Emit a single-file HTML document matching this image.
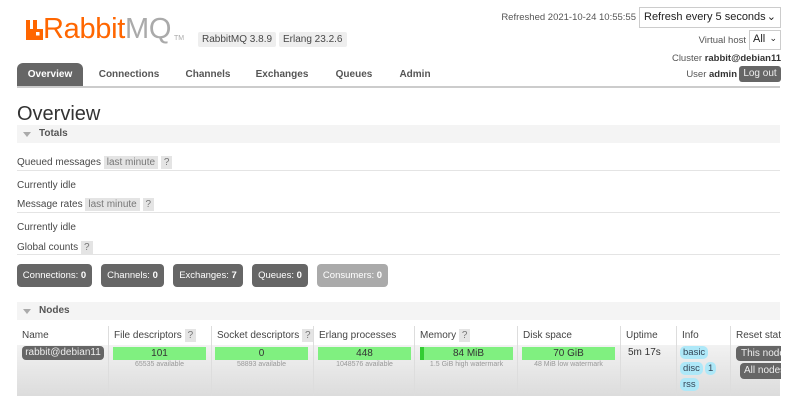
<!DOCTYPE html>
<html><head><style>
*{margin:0;padding:0;box-sizing:border-box}
body{width:800px;height:400px;overflow:hidden;background:#fff;font-family:"Liberation Sans",sans-serif;color:#484848;font-size:10px;position:relative}
.a{position:absolute;white-space:nowrap}
.r{position:absolute;white-space:nowrap;text-align:right}
.badge{background:#eee;padding:2px 4px;border-radius:2px}
.tab{position:absolute;top:63px;height:24px;line-height:24px;font-weight:bold;font-size:10px;color:#555;text-align:center}
.sep{position:absolute;left:17px;width:763px;height:1px;background:#e4e4e4}
.btn{position:absolute;top:264px;height:23px;line-height:23px;background:#666;color:#fff;border-radius:4px;text-align:center;font-size:9.5px}
.q{background:#e4e4e4;padding:1px 3px;color:#777}
.bar{position:absolute;left:17px;width:763px;height:18px;background:#f4f4f4;font-weight:bold;font-size:10px;line-height:18px;padding-left:22px;color:#555}
.bar:before{content:"";position:absolute;left:6px;top:7px;border-left:4px solid transparent;border-right:4px solid transparent;border-top:5px solid #aaa}
.th{position:absolute;top:326px;height:20px;line-height:20px;font-size:10px;color:#444;padding-left:5px;border-left:1px solid #ddd;white-space:nowrap}
.g{position:absolute;top:347px;height:13px;background:#80f080;text-align:center;font-size:10px;color:#333;line-height:13px}
.s{position:absolute;top:361px;font-size:7px;color:#999;text-align:center}
.pill{position:absolute;background:#aee8f8;color:#345;border-radius:5px;font-size:9.5px;padding:1px 3px}
#clip{position:absolute;left:0;top:0;width:781px;height:400px;overflow:hidden}
</style></head><body><div id="clip">
<svg class="a" style="left:26px;top:20px" width="17" height="20" viewBox="0 0 17 20"><path d="M0 0h4v9h3V0h4v9h6v11H0z" fill="#f60"/><rect x="10" y="12" width="3.5" height="3.5" fill="#fff"/></svg>
<div class="a" style="left:43px;top:13px;font-size:29px;color:#f60;letter-spacing:-0.3px">Rabbit<span style="color:#aaa">MQ</span></div>
<div class="a" style="left:174px;top:35px;font-size:7px;color:#aaa">TM</div>
<div class="a badge" style="left:198px;top:32px">RabbitMQ 3.8.9</div>
<div class="a badge" style="left:279px;top:32px">Erlang 23.2.6</div>
<div class="a" style="left:17px;top:63px;width:66px;height:24px;background:#666;border-radius:6px 6px 0 0"></div>
<div class="tab" style="left:17px;width:66px;color:#fff">Overview</div>
<div class="tab" style="left:93px;width:72px">Connections</div>
<div class="tab" style="left:178px;width:60px">Channels</div>
<div class="tab" style="left:250px;width:64px">Exchanges</div>
<div class="tab" style="left:330px;width:48px">Queues</div>
<div class="tab" style="left:395px;width:40px">Admin</div>
<div class="a" style="left:17px;top:86px;width:763px;height:2px;background:#ccc"></div>
<div class="r" style="right:145px;top:12px;color:#555;font-size:9.5px">Refreshed 2021-10-24 10:55:55</div>
<div class="a" style="left:639px;top:7px;width:142px;height:21px;border:1px solid #ccc;font-size:11px;color:#222;padding:3px 4px">Refresh every 5 seconds<span style="position:absolute;right:4px;top:2px">⌄</span></div>
<div class="r" style="right:35px;top:35px;color:#555;font-size:9.5px">Virtual host</div>
<div class="a" style="left:749px;top:30px;width:32px;height:20px;border:1px solid #ccc;font-size:11px;color:#222;padding:2px 3px">All<span style="font-size:9px;position:absolute;right:3px;top:2px">⌄</span></div>
<div class="r" style="right:0px;top:53px;color:#555;font-size:9.5px">Cluster <b style="color:#333">rabbit@debian11</b></div>
<div class="r" style="right:44px;top:69px;color:#555;font-size:9.5px">User <b style="color:#333">admin</b></div>
<div class="a" style="left:739px;top:66px;width:42px;height:16px;background:#666;color:#eee;border-radius:3px;text-align:center;line-height:16px">Log out</div>
<div class="a" style="left:17px;top:103px;font-size:20px;color:#333">Overview</div>
<div class="bar" style="top:125px">Totals</div>
<div class="a" style="left:17px;top:157px">Queued messages <span class="q">last minute</span> <span class="q">?</span></div>
<div class="sep" style="top:170px"></div>
<div class="a" style="left:17px;top:180px">Currently idle</div>
<div class="a" style="left:17px;top:199px">Message rates <span class="q">last minute</span> <span class="q">?</span></div>
<div class="sep" style="top:212px"></div>
<div class="a" style="left:17px;top:222px">Currently idle</div>
<div class="a" style="left:17px;top:242px">Global counts <span class="q">?</span></div>
<div class="sep" style="top:254px"></div>
<div class="btn" style="left:17px;width:75px">Connections: <b>0</b></div>
<div class="btn" style="left:101px;width:63px">Channels: <b>0</b></div>
<div class="btn" style="left:173px;width:70px">Exchanges: <b>7</b></div>
<div class="btn" style="left:252px;width:56px">Queues: <b>0</b></div>
<div class="btn" style="left:317px;width:71px;background:#aaa">Consumers: <b>0</b></div>
<div class="bar" style="top:302px">Nodes</div>
<div class="a" style="left:17px;top:345px;width:763px;height:51px;background:linear-gradient(#f2f2f2,#dcdcdc)"></div>
<div class="th" style="left:17px;border:0">Name</div>
<div class="th" style="left:108px">File descriptors <span class="q">?</span></div>
<div class="th" style="left:211px">Socket descriptors <span class="q">?</span></div>
<div class="th" style="left:313px">Erlang processes</div>
<div class="th" style="left:414px">Memory <span class="q">?</span></div>
<div class="th" style="left:517px">Disk space</div>
<div class="th" style="left:620px">Uptime</div>
<div class="th" style="left:676px">Info</div>
<div class="th" style="left:730px">Reset stats</div>
<div class="a" style="left:108px;top:345px;width:1px;height:51px;background:#ddd"></div>
<div class="a" style="left:211px;top:345px;width:1px;height:51px;background:#ddd"></div>
<div class="a" style="left:313px;top:345px;width:1px;height:51px;background:#ddd"></div>
<div class="a" style="left:414px;top:345px;width:1px;height:51px;background:#ddd"></div>
<div class="a" style="left:517px;top:345px;width:1px;height:51px;background:#ddd"></div>
<div class="a" style="left:620px;top:345px;width:1px;height:51px;background:#ddd"></div>
<div class="a" style="left:676px;top:345px;width:1px;height:51px;background:#ddd"></div>
<div class="a" style="left:730px;top:345px;width:1px;height:51px;background:#ddd"></div>
<div class="a" style="left:22px;top:346px;width:82px;height:14px;background:#666;color:#eee;border-radius:4px;text-align:center;line-height:14px">rabbit@debian11</div>
<div class="g" style="left:113px;width:93px">101</div><div class="s" style="left:113px;width:93px">65535 available</div>
<div class="g" style="left:215px;width:93px">0</div><div class="s" style="left:215px;width:93px">58893 available</div>
<div class="g" style="left:318px;width:93px">448</div><div class="s" style="left:318px;width:93px">1048576 available</div>
<div class="g" style="left:420px;width:93px;border-left:4px solid #3c3">84 MiB</div><div class="s" style="left:420px;width:93px">1.5 GiB high watermark</div>
<div class="g" style="left:522px;width:93px">70 GiB</div><div class="s" style="left:522px;width:93px">48 MiB low watermark</div>
<div class="a" style="left:628px;top:347px;color:#333">5m 17s</div>
<div class="pill" style="left:680px;top:346px">basic</div>
<div class="pill" style="left:680px;top:362px">disc</div>
<div class="pill" style="left:705px;top:362px">1</div>
<div class="pill" style="left:680px;top:378px">rss</div>
<div class="a" style="left:736px;top:346px;width:50px;height:15px;background:#666;color:#eee;border-radius:4px;line-height:15px;padding-left:5px">This node</div>
<div class="a" style="left:740px;top:363px;width:50px;height:16px;background:#666;color:#eee;border-radius:4px;line-height:16px;padding-left:4px">All nodes</div>
</div></body></html>
